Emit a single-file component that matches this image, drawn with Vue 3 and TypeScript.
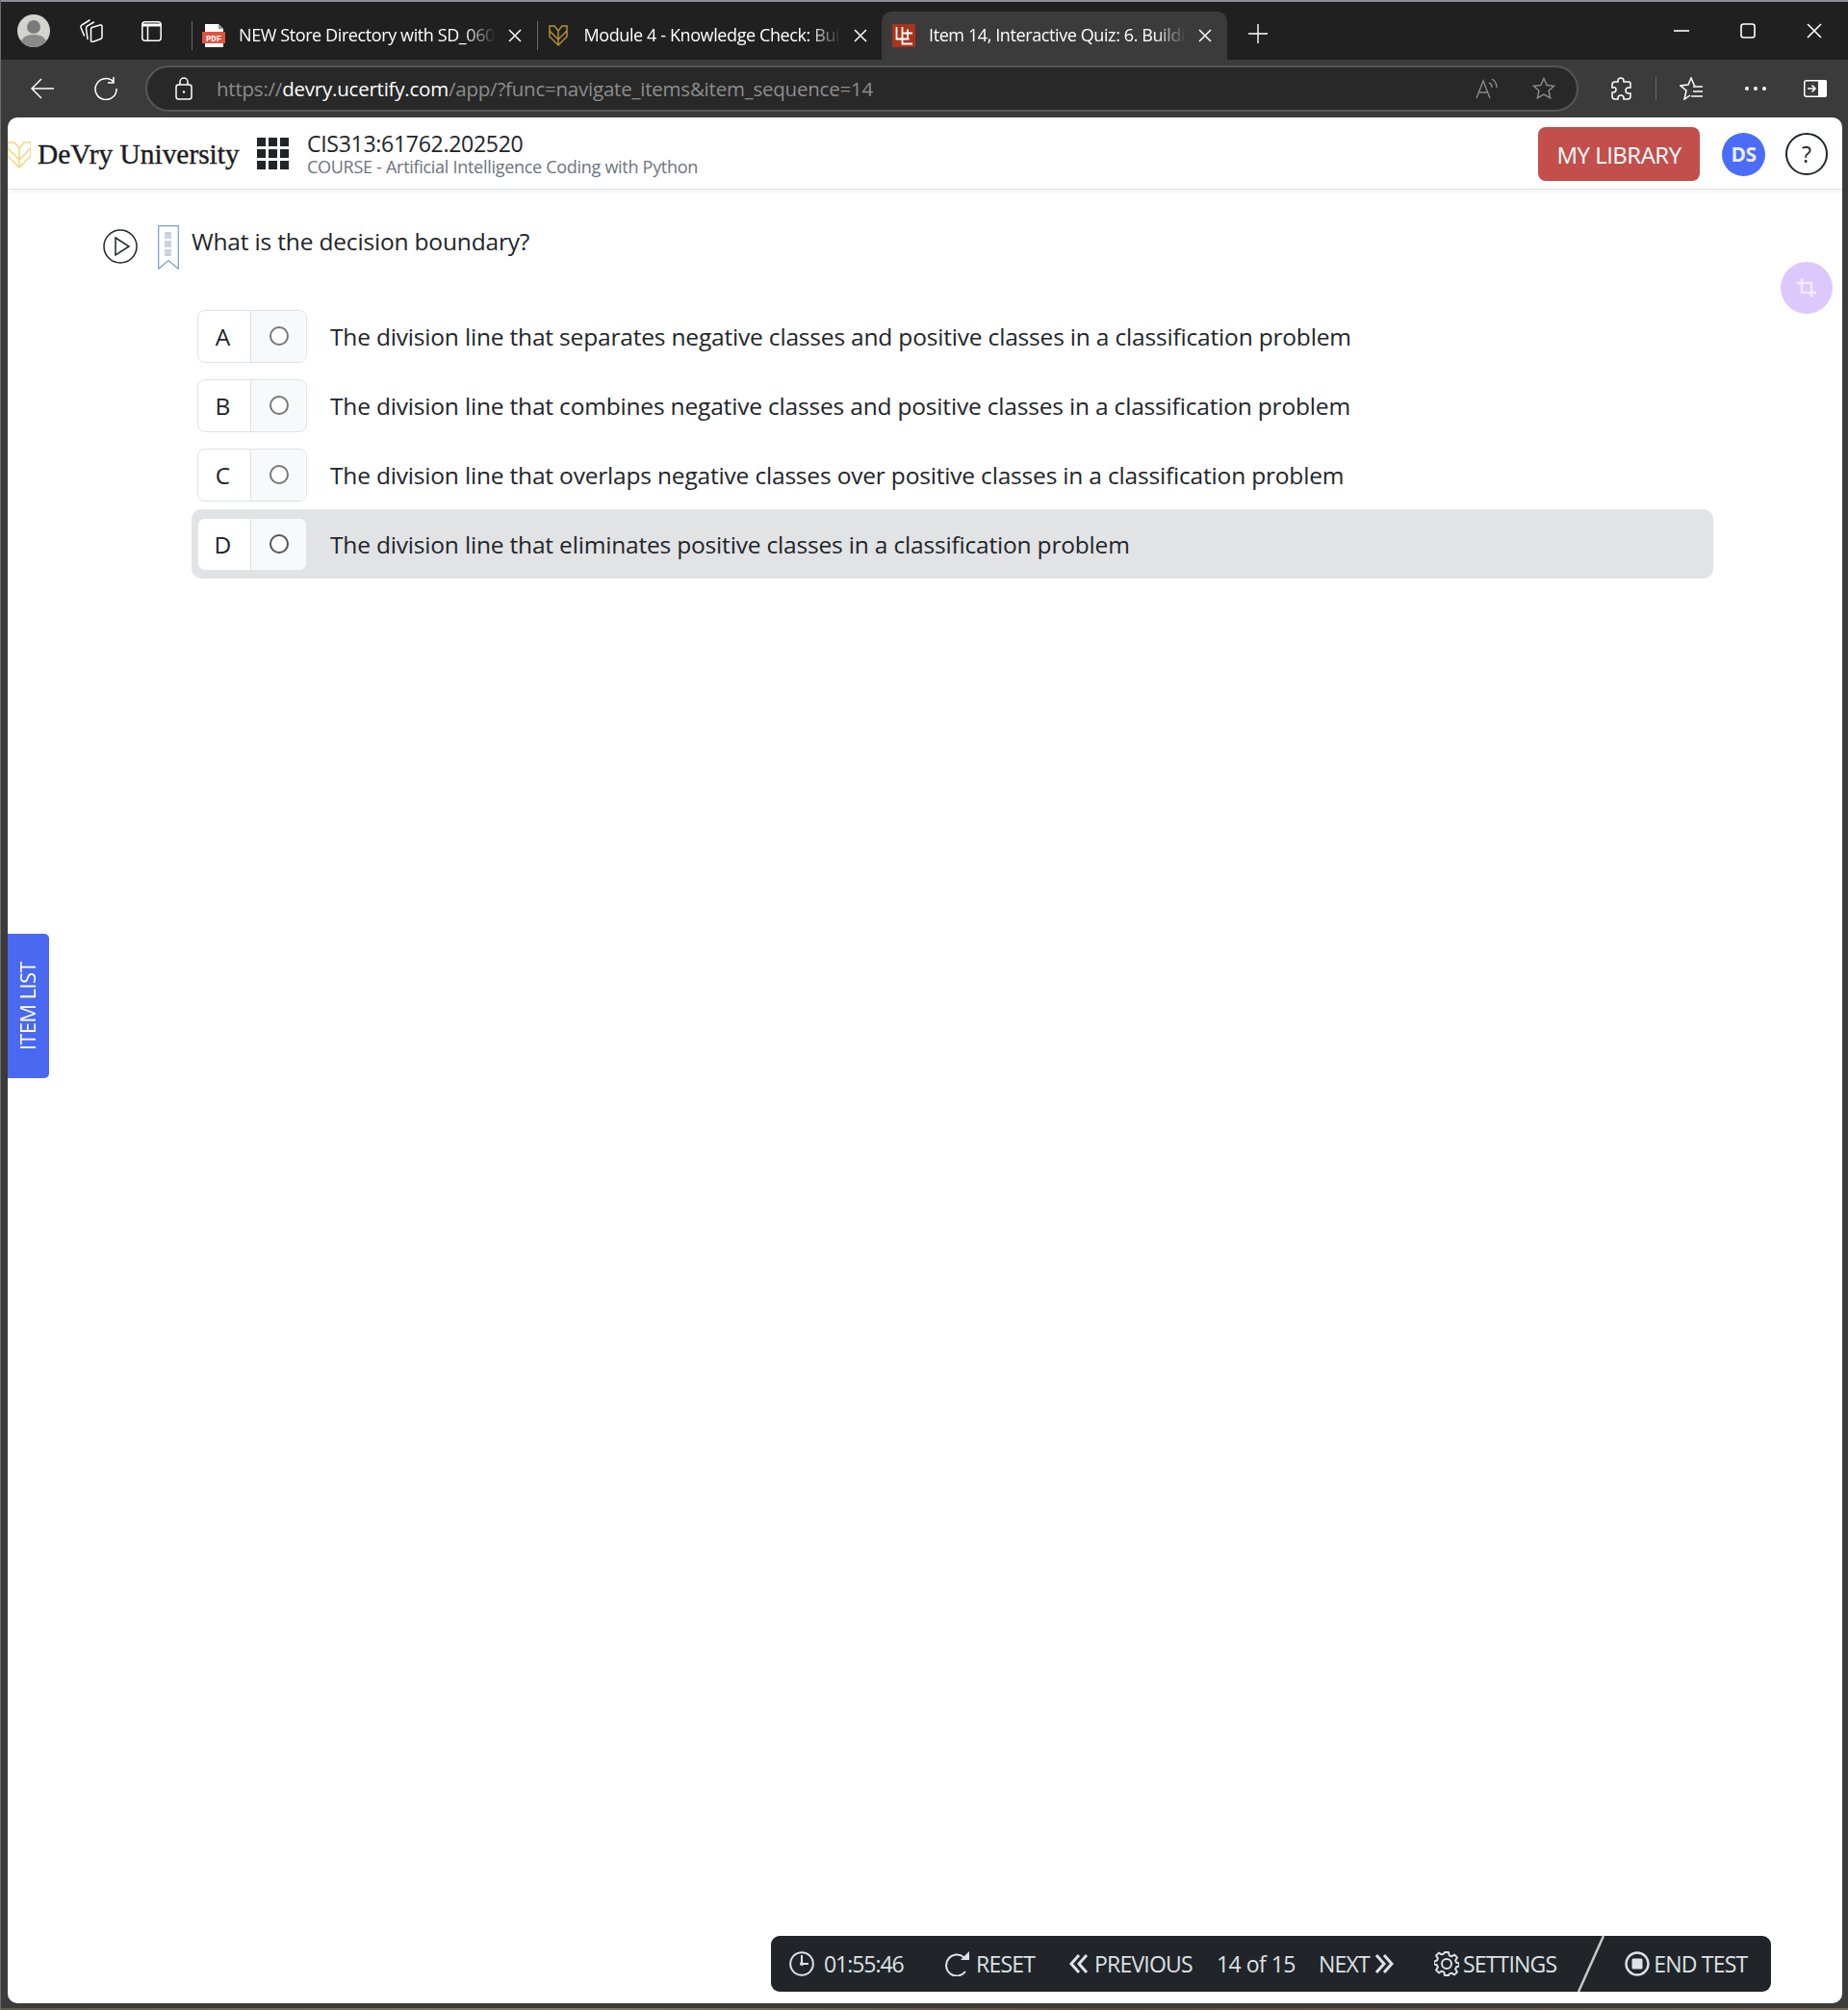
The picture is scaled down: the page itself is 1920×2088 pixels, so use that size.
<script setup lang="ts">
interface Tab { title: string; icon: string; active?: boolean }
interface Option { letter: string; text: string; hover?: boolean }

const tabs: Tab[] = [
  { title: 'NEW Store Directory with SD_0605', icon: 'pdf' },
  { title: 'Module 4 - Knowledge Check: Building', icon: 'devry' },
  { title: 'Item 14, Interactive Quiz: 6. Building', icon: 'uc', active: true },
]

const options: Option[] = [
  { letter: 'A', text: 'The division line that separates negative classes and positive classes in a classification problem' },
  { letter: 'B', text: 'The division line that combines negative classes and positive classes in a classification problem' },
  { letter: 'C', text: 'The division line that overlaps negative classes over positive classes in a classification problem' },
  { letter: 'D', text: 'The division line that eliminates positive classes in a classification problem', hover: true },
]
</script>

<template>
  <div class="window">
    <div class="tabstrip">
      <div class="strip-left">
        <svg class="avatar" viewBox="0 0 34 34">
          <circle cx="17" cy="17" r="17" fill="#d4d4ce" />
          <circle cx="17" cy="13" r="7" fill="#7b7b7b" />
          <path d="M4 28c2-6 8-7 13-7s11 1 13 7a17 17 0 0 1-26 0z" fill="#8a8a8a" />
        </svg>
        <svg class="collections" viewBox="0 0 24 24" fill="none" stroke="#fff" stroke-width="1.500" stroke-linecap="round">
          <path d="M12.500 8.500l8.500-2.500q2-.5 2 1.500v11q0 1.500-1.500 2l-8 3q-2 .5-2-1.500V10.500q0-1.500 1-2z" />
          <path d="M8 20.500L6.500 9.500q0-1.500 1-2.500l7-4" />
          <path d="M4.500 17L1 8.500q-.5-1.500 1-2.500l8-5" />
        </svg>
        <svg class="vtabs" viewBox="0 0 21 21" fill="none" stroke="#fff" stroke-width="1.500">
          <rect x="0.800" y="0.800" width="19.400" height="19.400" rx="3" />
          <path d="M1 2.500h19v3H1z" fill="#fff" stroke="none" />
          <path d="M6.500 5V20" />
        </svg>
      </div>
      <div v-for="t in tabs" :key="t.title" class="tab" :class="{ active: t.active }">
        <span v-if="!t.active" class="tab-sep"></span>
        <svg v-if="t.icon === 'pdf'" class="favicon" viewBox="0 0 24 24">
          <path d="M3 0h14l5 5v19H3z" fill="#fff" />
          <path d="M17 0v5h5" fill="#999" />
          <rect x="0" y="8" width="24" height="12" fill="#e0533f" />
          <text x="12" y="17.500" text-anchor="middle" class="pdf-label">PDF</text>
        </svg>
        <svg v-else-if="t.icon === 'devry'" class="favicon small" viewBox="0 0 20 22" fill="none" stroke="#b8962f" stroke-width="1.400">
          <path d="M1 1h5l4 5 4-5h5v11l-9 9-9-9z" />
          <path d="M10 6v15M1 6l9 9 9-9" />
        </svg>
        <svg v-else class="favicon" viewBox="0 0 24 24">
          <rect width="24" height="24" rx="1" fill="#a9341c" />
          <path d="M4.500 3v12.500h13M10.500 3v17.500h10.500M16 5.500v10M10.500 9.500H21" fill="none" stroke="#fff" stroke-width="1.800" />
        </svg>
        <span class="tab-title">{{ t.title }}</span>
        <svg class="tab-close" viewBox="0 0 14 14" stroke="#fff" stroke-width="1.500">
          <path d="M1 1l12 12M13 1L1 13" />
        </svg>
      </div>
      <svg class="new-tab" viewBox="0 0 20 20" stroke="#fff" stroke-width="1.400">
        <path d="M10 0v20M0 10h20" />
      </svg>
      <div class="win-controls">
        <svg viewBox="0 0 16 16" stroke="#fff" stroke-width="1.600"><path d="M0 8h16" /></svg>
        <svg viewBox="0 0 16 16" fill="none" stroke="#fff" stroke-width="1.600"><rect x="1" y="1" width="14" height="14" rx="2.500" /></svg>
        <svg viewBox="0 0 16 16" stroke="#fff" stroke-width="1.600"><path d="M1 1l14 14M15 1L1 15" /></svg>
      </div>
    </div>

    <div class="toolbar">
      <svg class="tool back" viewBox="0 0 24 22" fill="none" stroke="#fff" stroke-width="1.500">
        <path d="M1 11h23M11 1L1 11l10 10" />
      </svg>
      <svg class="tool refresh" viewBox="0 0 24 24" fill="none" stroke="#fff" stroke-width="1.500">
        <path d="M20 5a11 11 0 1 0 3 7" />
        <path d="M20 0v6h-6" />
      </svg>
      <div class="address">
        <svg class="lock" viewBox="0 0 18 24" fill="none" stroke="#fff" stroke-width="1.500">
          <rect x="1" y="8" width="16" height="15" rx="2.500" />
          <path d="M5 8V5a4 4 0 0 1 8 0v3" />
          <circle cx="9" cy="15.500" r="1.200" fill="#fff" stroke="none" />
        </svg>
        <span class="url"><span class="dim">https://</span>devry.ucertify.com<span class="dim">/app/?func=navigate_items&amp;item_sequence=14</span></span>
        <svg class="read" viewBox="0 0 24 22" fill="none" stroke="#8a8a8a" stroke-width="1.400">
          <path d="M1 21L8 3l7 18M3.500 15h9" />
          <path d="M14 5q3 1 3 5M17 1q5 3 5 9" />
        </svg>
        <svg class="star" viewBox="0 0 24 24" fill="none" stroke="#8a8a8a" stroke-width="1.500">
          <path d="M12 1.500l3.200 7 7.300.8-5.400 5 1.500 7.400-6.600-3.700-6.600 3.700 1.500-7.400-5.400-5 7.300-.8z" />
        </svg>
      </div>
      <svg class="tool ext" viewBox="0 0 22 24" fill="none" stroke="#fff" stroke-width="1.500">
        <path d="M8 4q0-3 3-3t3 3v1h5q2 0 2 2v4h-2q-3 0-3 3t3 3h2v3q0 3-3 3h-4v-1q0-3-3-3t-3 3v1H5q-3 0-3-3v-4h1q3 0 3-3T3 11H2V8q0-3 3-3h3z" />
      </svg>
      <span class="tool-sep"></span>
      <svg class="tool fav" viewBox="0 0 24 24" fill="none" stroke="#fff" stroke-width="1.500">
        <path d="M16 9l-1-1-3-7-3 7-8 1 6 5-2 9 6-4" />
        <path d="M14 10h10M14 15h10M12 20h12" />
      </svg>
      <div class="tool dots"><i></i><i></i><i></i></div>
      <svg class="tool side" viewBox="0 0 24 18">
        <rect x="0.750" y="0.750" width="22.500" height="16.500" rx="2" fill="none" stroke="#fff" stroke-width="1.500" />
        <rect x="15" y="0" width="9" height="18" rx="2" fill="#fff" />
        <path d="M4 9h8M8.500 5.500L12 9l-3.500 3.500" fill="none" stroke="#fff" stroke-width="1.500" />
      </svg>
    </div>

    <div class="page">
      <header class="site-header">
        <svg class="logo-mark" viewBox="0 0 24 28" fill="none" stroke="#f0d77e" stroke-width="1.500">
          <path d="M0 1h7l5 6 5-6h7v14L12 27 0 15z" />
          <path d="M12 7v20M0 7l12 12L24 7" />
        </svg>
        <span class="logo-text">DeVry University</span>
        <div class="apps">
          <i v-for="n in 9" :key="n"></i>
        </div>
        <div class="course">
          <div class="course-code">CIS313:61762.202520</div>
          <div class="course-name">COURSE - Artificial Intelligence Coding with Python</div>
        </div>
        <button class="library">MY LIBRARY</button>
        <div class="user">DS</div>
        <div class="help">?</div>
      </header>

      <main class="quiz">
        <div class="question">
          <svg class="play" viewBox="0 0 36 36" fill="none" stroke="#212529" stroke-width="1.500">
            <circle cx="18" cy="18" r="17" />
            <path d="M13 9l14 9-14 9z" />
          </svg>
          <svg class="bookmark" viewBox="0 0 22 46">
            <path d="M.7.700h20.600v44.600L11 36.500.7 45.300z" fill="#fff" stroke="#7b9ccf" stroke-width="1.200" />
            <rect x="7" y="7" width="7" height="7" fill="#ced4da" />
            <rect x="7" y="16" width="7" height="7" fill="#ced4da" />
            <rect x="7" y="25" width="7" height="7" fill="#ced4da" />
          </svg>
          <div class="question-text">What is the decision boundary?</div>
        </div>

        <div class="options">
          <div v-for="o in options" :key="o.letter" class="option" :class="{ hover: o.hover }">
            <div class="choice">
              <span class="letter">{{ o.letter }}</span>
              <span class="radio-cell"><span class="radio"></span></span>
            </div>
            <span class="option-text">{{ o.text }}</span>
          </div>
        </div>
      </main>

      <div class="item-list"><span>ITEM LIST</span></div>

      <div class="fab">
        <svg viewBox="0 0 20 20" fill="none" stroke="#f2eafe" stroke-width="2.500">
          <path d="M5 0v15h15M0 5h15v15" />
        </svg>
      </div>

      <div class="test-bar">
        <svg class="clock" viewBox="0 0 26 26" fill="none" stroke="#dee2e6" stroke-width="2">
          <circle cx="13" cy="13" r="11.800" />
          <path d="M13 4v9h7" />
          <circle cx="13" cy="13" r="2" fill="#dee2e6" stroke="none" />
        </svg>
        <span class="timer">01:55:46</span>
        <svg class="reset-icon" viewBox="0 0 26 26" fill="none" stroke="#dee2e6" stroke-width="2">
          <path d="M19.500 6.500A11 11 0 1 0 21 21" />
          <path d="M25 0v9h-9z" fill="#dee2e6" stroke="none" />
        </svg>
        <span class="label">RESET</span>
        <svg class="chev prev" viewBox="0 0 20 20" fill="none" stroke="#dee2e6" stroke-width="3">
          <path d="M10 1l-8 9 8 9M18 1l-8 9 8 9" />
        </svg>
        <span class="label">PREVIOUS</span>
        <span class="label pager">14 of 15</span>
        <span class="label">NEXT</span>
        <svg class="chev next" viewBox="0 0 20 20" fill="none" stroke="#dee2e6" stroke-width="3">
          <path d="M2 1l8 9-8 9M10 1l8 9-8 9" />
        </svg>
        <svg class="gear" viewBox="0 0 26 26" fill="none" stroke="#dee2e6" stroke-width="2" stroke-linejoin="round">
          <circle cx="13" cy="13" r="5" />
          <path d="M11 1h4l.8 3.400 2.300 1 3-1.800 2.800 2.800-1.800 3 1 2.300 3 .8v3l-3 .8-1 2.300 1.800 3-2.800 2.800-3-1.800-2.300 1L15 25h-4l-.8-3.400-2.300-1-3 1.800-2.800-2.800 1.800-3-1-2.300-3-.8v-3l3-.8 1-2.300-1.800-3 2.800-2.800 3 1.800 2.300-1z" />
        </svg>
        <span class="label">SETTINGS</span>
        <svg class="slash" viewBox="0 0 28 58" stroke="#c8c8c8" stroke-width="2.500">
          <path d="M1 58L27 0" />
        </svg>
        <svg class="stop" viewBox="0 0 26 26">
          <circle cx="13" cy="13" r="11.500" fill="none" stroke="#dee2e6" stroke-width="2.400" />
          <rect x="7.500" y="7.500" width="11" height="11" rx="1.500" fill="#dee2e6" />
        </svg>
        <span class="label">END TEST</span>
      </div>
    </div>
    <div class="wallpaper"></div>
  </div>
</template>

<style>
html, body { margin: 0; background: #3b3b3b; }
</style>

<style scoped>
.window {
  width: 1920px;
  height: 2088px;
  display: flex;
  flex-direction: column;
  background: #3b3b3b;
  font-family: "Open Sans", "Noto Sans", sans-serif;
  overflow: hidden;
  border-left: 1px solid #6d6d70;
  box-sizing: border-box;
}

/* ---- tabs ---- */
.tabstrip {
  height: 62px;
  box-sizing: border-box;
  border-top: 2px solid #8b8d94;
  background: #202020;
  display: flex;
  align-items: flex-end;
  flex: none;
}
.strip-left {
  width: 198px;
  height: 60px;
  flex: none;
  display: flex;
  align-items: center;
  padding-left: 17px;
  box-sizing: border-box;
}
.avatar { width: 34px; height: 34px; }
.collections { width: 24px; height: 24px; margin-left: 31px; }
.vtabs { width: 21px; height: 21px; margin-left: 40px; }
.tab {
  width: 358.500px;
  height: 50px;
  flex: none;
  display: flex;
  align-items: center;
  position: relative;
  color: #fff;
  font-size: 18px;
  box-sizing: border-box;
  padding-left: 11px;
}
.tab.active {
  background: #3b3b3b;
  border-radius: 10px 10px 0 0;
}
.tab-sep {
  position: absolute;
  left: 0;
  top: 10px;
  height: 30px;
  width: 1px;
  background: #6a6a6a;
}
.favicon { width: 24px; height: 24px; flex: none; margin-right: 14px; }
.favicon.small { width: 20px; height: 22px; margin-left: 1px; margin-right: 17px; }
.pdf-label {
  font: 700 9px "Liberation Mono", monospace;
  fill: #fff;
}
.tab-title {
  width: 267px;
  white-space: nowrap;
  overflow: hidden;
  letter-spacing: -0.400px;
  line-height: 22px;
  margin-top: -2px;
  -webkit-mask-image: linear-gradient(90deg, #000 88%, transparent 100%);
  mask-image: linear-gradient(90deg, #000 88%, transparent 100%);
}
.tab-close { width: 14px; height: 14px; margin-left: 13px; flex: none; }
.new-tab { width: 20px; height: 20px; margin: 0 0 17px 22px; flex: none; }
.win-controls {
  margin-left: auto;
  align-self: flex-start;
  display: flex;
  gap: 53px;
  padding: 22px 27px 0 0;
}
.win-controls svg { width: 16px; height: 16px; display: block; }

/* ---- toolbar ---- */
.toolbar {
  height: 60px;
  flex: none;
  display: flex;
  align-items: center;
  background: #3b3b3b;
  padding-left: 31px;
  box-sizing: border-box;
}
.tool { flex: none; }
.back { width: 24px; height: 22px; }
.refresh { width: 24px; height: 24px; margin-left: 42px; }
.address {
  margin-left: 29px;
  width: 1489px;
  height: 48px;
  box-sizing: border-box;
  border: 2px solid #565656;
  border-radius: 24px;
  background: #282828;
  display: flex;
  align-items: center;
  padding-left: 29px;
  flex: none;
}
.lock { width: 18px; height: 24px; flex: none; }
.url {
  margin-left: 25px;
  font-size: 20.500px;
  letter-spacing: -0.220px;
  color: #fff;
  white-space: nowrap;
}
.dim { color: #8d8d8d; }
.read { width: 24px; height: 22px; margin-left: auto; flex: none; }
.star { width: 24px; height: 24px; margin: 0 22px 0 35px; flex: none; }
.ext { width: 22px; height: 24px; margin-left: 33px; }
.tool-sep { width: 1px; height: 24px; background: #6a6a6a; margin-left: 25px; flex: none; }
.fav { width: 24px; height: 24px; margin-left: 24px; }
.dots { display: flex; gap: 5px; margin-left: 44px; }
.dots i { width: 4px; height: 4px; border-radius: 50%; background: #fff; }
.side { width: 24px; height: 18px; margin-left: 39px; }

/* ---- page ---- */
.page {
  position: relative;
  margin: 0 6px 0 7px;
  height: 1959px;
  flex: none;
  background: #fff;
  border-radius: 10px;
  color: #212529;
  overflow: hidden;
}
.site-header {
  height: 75px;
  box-sizing: border-box;
  border-bottom: 1px solid #dee2e6;
  box-shadow: 0 2px 5px rgba(33, 37, 41, 0.06);
  display: flex;
  align-items: center;
  padding: 2px 15px 0 0;
}
.logo-mark { width: 24px; height: 28px; flex: none; margin-top: 2px; }
.logo-text {
  margin-left: 7px;
  font: 400 29.400px "Liberation Serif", serif;
  -webkit-text-stroke: 0.400px #1c1c1c;
  color: #1c1c1c;
  white-space: nowrap;
  width: 228px;
  flex: none;
}
.apps {
  width: 33px;
  display: grid;
  grid-template-columns: repeat(3, 9px);
  gap: 3px;
  flex: none;
  margin-top: -2px;
}
.apps i { height: 9px; background: #212529; }
.course { margin: -3px 0 0 19px; }
.course-code { font-size: 23px; line-height: 28px; letter-spacing: -0.280px; color: #212529; }
.course-name { font-size: 18px; line-height: 20px; letter-spacing: -0.290px; color: #6c757d; }
.library {
  margin-left: auto;
  width: 168px;
  height: 56px;
  border: 0;
  border-radius: 8px;
  background: #c24f4c;
  color: #fff;
  font: 400 24px "Open Sans", sans-serif;
  letter-spacing: -0.500px;
  padding: 0;
}
.user {
  margin-left: 23px;
  width: 45px;
  height: 45px;
  border-radius: 50%;
  background: #4a6cf7;
  color: #e9edff;
  font-size: 21px;
  font-weight: 700;
  letter-spacing: -0.500px;
  display: flex;
  align-items: center;
  justify-content: center;
}
.help {
  margin-left: 21px;
  width: 44px;
  height: 44px;
  box-sizing: border-box;
  border: 2px solid #212529;
  border-radius: 50%;
  font-size: 23px;
  display: flex;
  align-items: center;
  justify-content: center;
}

/* ---- question ---- */
.quiz { padding-left: 99px; }
.question {
  display: flex;
  align-items: flex-start;
  padding-top: 37px;
  height: 116px;
  box-sizing: border-box;
}
.play { width: 36px; height: 36px; margin-top: 4px; flex: none; }
.bookmark { width: 22px; height: 46px; margin-left: 21px; flex: none; }
.question-text {
  margin: 1px 0 0 13px;
  font-size: 24.500px;
  line-height: 32px;
  letter-spacing: -0.170px;
}
.options { margin-left: 92px; width: 1581px; }
.option {
  height: 72px;
  box-sizing: border-box;
  padding: 9px 6px;
  display: flex;
  align-items: center;
  border-radius: 10px;
  font-size: 24.500px;
}
.option.hover { background: #e2e3e5; }
.choice {
  width: 114px;
  height: 55px;
  flex: none;
  box-sizing: border-box;
  border: 1px solid #dee2e6;
  border-radius: 8px;
  display: flex;
  overflow: hidden;
  background: #fff;
}
.option.hover .choice { border-color: #e2e3e5; }
.letter {
  width: 55px;
  box-sizing: border-box;
  padding: 1px 3px 0 0;
  border-right: 1px solid #dee2e6;
  display: flex;
  align-items: center;
  justify-content: center;
}
.radio-cell {
  flex: 1;
  background: #f8f9fa;
  display: flex;
  align-items: center;
  justify-content: center;
  padding-bottom: 1px;
}
.radio {
  width: 20px;
  height: 20px;
  box-sizing: border-box;
  border: 2px solid #777;
  border-radius: 50%;
  background: #fff;
}
.option.hover .radio { border-color: #555; }
.option-text { margin-left: 24px; letter-spacing: -0.180px; white-space: nowrap; }

/* ---- overlays ---- */
.item-list {
  position: absolute;
  left: 0;
  top: 848px;
  width: 43px;
  height: 150px;
  background: #4a69f0;
  border-radius: 0 5px 5px 0;
  display: flex;
  align-items: center;
  justify-content: center;
  padding-right: 3px;
  box-sizing: border-box;
}
.item-list span {
  writing-mode: vertical-rl;
  transform: rotate(180deg);
  color: #fff;
  font-size: 21.500px;
  letter-spacing: -0.400px;
  white-space: nowrap;
}
.fab {
  position: absolute;
  left: 1842px;
  top: 150px;
  width: 54px;
  height: 54px;
  border-radius: 50%;
  background: #dcc8fb;
  display: flex;
  align-items: center;
  justify-content: center;
}
.fab svg { width: 20px; height: 20px; }
.test-bar {
  position: absolute;
  left: 793px;
  top: 1889px;
  width: 1039px;
  height: 58px;
  box-sizing: border-box;
  background: #212529;
  border-radius: 9px;
  display: flex;
  align-items: center;
  padding-left: 19px;
  color: #dee2e6;
  font-size: 23px;
  letter-spacing: -0.800px;
  white-space: nowrap;
}
.clock { width: 26px; height: 26px; flex: none; }
.timer { margin-left: 10px; width: 82px; letter-spacing: -1.050px; }
.reset-icon { width: 26px; height: 26px; margin-left: 44px; margin-right: 6px; flex: none; }
.chev { width: 20px; height: 20px; flex: none; }
.prev { margin-left: 36px; margin-right: 6px; }
.next { margin-left: 5px; }
.pager { margin-left: 25px; letter-spacing: -0.500px; }
.pager + .label { margin-left: 24px; }
.gear { width: 26px; height: 26px; margin-left: 42px; margin-right: 4px; flex: none; }
.slash { width: 28px; height: 58px; margin-left: 22px; flex: none; }
.stop { width: 26px; height: 26px; margin-left: 21px; margin-right: 4px; flex: none; }
.wallpaper {
  height: 2px;
  margin-top: 5px;
  flex: none;
  background: linear-gradient(90deg, #6b5a3e, #8a7a55 30%, #5f4a33 60%, #7c6a48);
}
</style>
